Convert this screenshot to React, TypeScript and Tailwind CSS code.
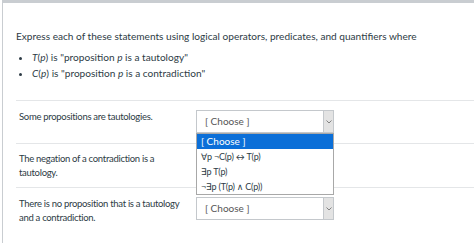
import { useState } from 'react';

interface Row {
  id: string;
  lines: string;
  pad: string;
  open?: boolean;
  hidden?: boolean;
}

const rows: Row[] = [
  { id: 'r1', lines: 'Some propositions are tautologies.', pad: 'pt-[9px] pb-[10px]', open: true },
  { id: 'r2', lines: 'The negation of a contradiction is a tautology.', pad: 'pt-[8px] pb-[7px]', hidden: true },
  { id: 'r3', lines: 'There is no proposition that is a tautology and a contradiction.', pad: 'pt-[9px] pb-[10px]' }
];

const options = ['[ Choose ]', '∀p ¬C(p) ↔ T(p)', '∃p T(p)', '¬∃p (T(p) ∧ C(p))'];

function Select({ open, hidden }: { open?: boolean; hidden?: boolean }) {
  const [selected] = useState(0);
  return (
    <div className="relative w-[138px] shrink-0">
      <div className={`flex h-[23px] border border-[#c4c8cc] bg-white ${hidden ? 'invisible' : ''}`}>
        <div className="flex flex-1 items-center pl-[8px] text-[10px] text-[#555]">[ Choose ]</div>
        <div className="flex w-[10px] items-center justify-center border-l border-[#c4c8cc] bg-[#e3e3e3]">
          <svg width="6" height="4" viewBox="0 0 6 4" fill="none">
            <polyline points="0.5,0.5 3,3 5.5,0.5" stroke="#777" strokeWidth="0.9" />
          </svg>
        </div>
      </div>

      {/* open dropdown list */}
      {open && (
        <div className="absolute left-0 top-full z-10 w-[138px] border border-[#a8a8a8] bg-white">
          {options.map((opt, i) => (
            <div
              key={opt}
              className={`h-[15px] pl-[4px] leading-[15px] ${
                i === selected ? 'bg-[#0b6fd8] text-[10px] text-white' : 'text-[9px] tracking-[-0.2px] text-[#2d3b45]'
              }`}
            >
              {opt}
            </div>
          ))}
        </div>
      )}
    </div>
  );
}

export default function App() {
  return (
    <div
      className="h-[243px] w-[474px] overflow-hidden bg-white text-[#2d3b45]"
      style={{ fontFamily: 'Lato, "DejaVu Sans", sans-serif' }}
    >
      <div className="ml-[2px] h-full border-l border-t-[3px] border-[#c9cdd1]">
        <div className="pl-[13px] pt-[26px]">
          <p className="text-[10.1px] leading-[14px]">
            Express each of these statements using logical operators, predicates, and quantifiers where
          </p>
          <ul className="mt-[6px] pl-[16px] text-[10.1px] leading-[16px]">
            <li className="list-disc">
              <i>T</i>(<i>p</i>) is "proposition <i>p</i> is a tautology"
            </li>
            <li className="list-disc">
              <i>C</i>(<i>p</i>) is "proposition <i>p</i> is a contradiction"
            </li>
          </ul>

          <div className="mt-[19px]">
            {rows.map((row) => (
              <div key={row.id} className={`flex border-t border-[#e4e6e8] ${row.pad}`}>
                <div className="w-[176px] shrink-0 pl-[3px] text-[9.5px] leading-[14px] tracking-[-0.3px]">
                  {row.lines}
                </div>
                <div className="ml-[4px]">
                  <Select open={row.open} hidden={row.hidden} />
                </div>
              </div>
            ))}
          </div>
        </div>
      </div>
    </div>
  );
}
